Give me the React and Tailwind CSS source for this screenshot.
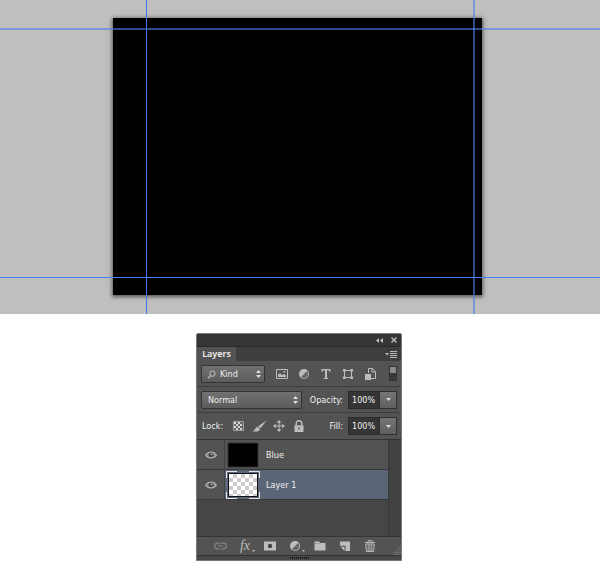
import { useState } from 'react'
import clsx from 'clsx'

const Svg = ({ w = 12, h = 12, className, children }) => (
  <svg width={w} height={h} viewBox={`0 0 ${w} ${h}`} fill="none" className={clsx('shrink-0', className)} aria-hidden="true">
    {children}
  </svg>
)

const SearchIcon = () => (
  <Svg w={9} h={9} className="text-[#c8c8c8]">
    <circle cx="5.4" cy="3.6" r="2.7" stroke="currentColor" />
    <path d="M3.5 5.6 1 8.3" stroke="currentColor" strokeWidth="1.2" />
  </Svg>
)

const UpDown = () => (
  <Svg w={5} h={8} className="pointer-events-none absolute right-1 top-[5px] text-[#e0e0e0]">
    <path d="M2.5 0 5 3H0zM2.5 8 0 5h5z" fill="currentColor" />
  </Svg>
)

const ImageIcon = () => (
  <Svg>
    <path d="M.5 1.5h11v9H.5z" stroke="currentColor" />
    <path d="M2 9V7l2-2 2 2.2L8 6l2 1.5V9z" fill="currentColor" />
    <path d="M7.5 3h1.8v1.6H7.5z" fill="currentColor" />
  </Svg>
)

const AdjustIcon = () => (
  <Svg>
    <circle cx="6" cy="6" r="5" fill="currentColor" />
    <path d="M3 9a4.200 4.200 0 0 0 6-6z" fill="#6a6a6a" />
  </Svg>
)

const TypeIcon = () => (
  <Svg>
    <path d="M1.5 1h9v3H9.8Q9.500 2.200 8.300 2.200H7V9.600Q7 10.300 8.400 10.300V11H3.600V10.300Q5 10.300 5 9.600V2.200H3.700Q2.500 2.200 2.200 4H1.500z" fill="currentColor" />
  </Svg>
)

const ShapeIcon = () => (
  <Svg>
    <path d="M2.500 2.500h7v7h-7z" stroke="currentColor" />
    <path d="M1 1h2.500v2.500H1zM8.500 1H11v2.500H8.500zM1 8.500h2.500V11H1zM8.500 8.500H11V11H8.500z" fill="currentColor" />
  </Svg>
)

const SmartIcon = () => (
  <Svg>
    <path d="M4.500 5V.5h4l3 3v7H7" stroke="currentColor" />
    <path d="M8 .5V4h3.500" stroke="currentColor" />
    <path d="M1 6h6v6H1z" fill="currentColor" />
  </Svg>
)

const CheckerIcon = () => (
  <Svg>
    <path d="M.5 1.500h10v9H.5z" fill="#666" stroke="#a0a0a0" />
    <path d="M1 2h2v2H1zM5 2h2v2H5zM3 4h2v2H3zM7 4h2v2H7zM1 6h2v2H1zM5 6h2v2H5zM3 8h2v2H3zM7 8h2v2H7z" fill="#d5d5d5" />
  </Svg>
)

const BrushIcon = () => (
  <Svg w={15}>
    <path d="M14.800.2 8.500 8.300 6.200 6.200z" fill="currentColor" />
    <path d="M5.600 6.700 8 9c-.5 2.500-3.900 3-7.800 2.200 2.800-.4 2.700-3.800 5.400-4.500z" fill="currentColor" />
  </Svg>
)

const MoveIcon = () => (
  <Svg>
    <path d="M6 1v10M1 6h10" stroke="currentColor" />
    <path d="m6 0 2.300 2.800H3.700zM6 12 3.700 9.200h4.600zM0 6l2.800-2.300v4.600zM12 6 9.200 8.300V3.700z" fill="currentColor" />
  </Svg>
)

const LockIcon = () => (
  <Svg>
    <path d="M3.200 5.500V3.500a2.800 2.800 0 0 1 5.600 0v2" stroke="currentColor" strokeWidth="1.400" />
    <path d="M1.500 5.300h9V12h-9z" fill="currentColor" />
    <path d="M5.400 7.300h1.200v2.500H5.400z" fill="#555" />
  </Svg>
)

const EyeIcon = () => (
  <Svg w={12} h={10}>
    <path d="M.7 5.300C3 1 9 1 11.300 5.300 9 8.900 3 8.900.7 5.300z" fill="#777" stroke="currentColor" strokeWidth="1.200" />
    <circle cx="6" cy="4.800" r="2.300" fill="#444" />
    <circle cx="6.600" cy="4.200" r=".9" fill="#bbb" />
  </Svg>
)

const LinkIcon = () => (
  <Svg w={13}>
    <path d="M5.800 3.200H3.500a2.800 2.800 0 0 0 0 5.600h2.300M7.200 3.200h2.300a2.800 2.800 0 0 1 0 5.600H7.200M4 6h5" stroke="#858585" strokeWidth="1.200" />
  </Svg>
)

const MaskIcon = () => (
  <Svg>
    <path d="M0 1.500h12v9H0z" fill="currentColor" />
    <circle cx="6" cy="6" r="2.200" fill="#444" />
  </Svg>
)

const FolderIcon = () => (
  <Svg>
    <path d="M.5 10.500v-9h4.700L6.500 3h5v7.500z" fill="currentColor" />
    <path d="M.5 3.500h5" stroke="#8b8b8b" strokeWidth=".7" />
  </Svg>
)

const NewIcon = () => (
  <Svg>
    <path d="M1 1.500h10v9.500H6.500V5.800H1z" fill="currentColor" />
    <path d="M1.500 6.800h4V11z" fill="currentColor" />
  </Svg>
)

const TrashIcon = () => (
  <Svg>
    <path d="M4 1.800V.7h4v1.100M1 2.500h10" stroke="currentColor" />
    <path d="M1.800 4h8.400l-.6 7.500H2.400z" stroke="currentColor" />
    <path d="M4.200 4.500v6.500M6 4.500v6.500M7.800 4.500v6.500" stroke="currentColor" strokeWidth=".9" />
  </Svg>
)

const Corner = () => (
  <Svg w={3} h={2} className="absolute -right-1 bottom-0">
    <path d="M0 0h3L1.500 2z" fill="currentColor" />
  </Svg>
)

const filters = [
  { name: 'Pixel layers', Icon: ImageIcon },
  { name: 'Adjustment layers', Icon: AdjustIcon },
  { name: 'Type layers', Icon: TypeIcon },
  { name: 'Shape layers', Icon: ShapeIcon },
  { name: 'Smart objects', Icon: SmartIcon },
]

const locks = [
  { name: 'Lock transparent pixels', Icon: CheckerIcon },
  { name: 'Lock image pixels', Icon: BrushIcon },
  { name: 'Lock position', Icon: MoveIcon },
  { name: 'Lock all', Icon: LockIcon },
]

const actions = [
  { name: 'Link layers', Icon: LinkIcon },
  { name: 'Layer style', text: 'fx', menu: true },
  { name: 'Add mask', Icon: MaskIcon },
  { name: 'New adjustment layer', Icon: AdjustIcon, menu: true },
  { name: 'New group', Icon: FolderIcon },
  { name: 'New layer', Icon: NewIcon },
  { name: 'Delete layer', Icon: TrashIcon },
]

const IconButton = ({ name, className, children }) => (
  <button type="button" aria-label={name} className={clsx('relative flex h-3 w-3 items-center justify-center text-[#bdbdbd]', className)}>
    {children}
  </button>
)

const Percent = ({ id, label, value, onChange }) => (
  <div className="ml-auto flex items-center">
    <label htmlFor={id} className="mr-[5px]">{label}</label>
    <input
      id={id}
      value={value}
      onChange={(e) => onChange(e.target.value)}
      className="h-[18px] w-8 border border-[#2b2b2b] bg-[#353535] pl-[3px] text-[9px] text-[#f0f0f0] outline-none"
    />
    <button type="button" aria-label={`${label} slider`} className="flex h-[18px] w-[17px] items-center justify-center border border-l-0 border-[#2f2f2f] bg-linear-to-b from-[#747474] to-[#606060]">
      <Svg w={5} h={3}><path d="M0 0h5L2.500 3z" fill="#ddd" /></Svg>
    </button>
  </div>
)

const selectClass =
  'h-[18px] w-full appearance-none rounded-xs border border-[#333] bg-linear-to-b from-[#717171] to-[#5c5c5c] text-[9px] text-[#eee] outline-none'

const Canvas = () => (
  <section aria-label="Canvas" className="relative bg-[#bfbfbf] pt-[18px] pr-[118px] pb-[19px] pl-[113px]">
    <div className="aspect-[369/277] w-full bg-black shadow-[0_1px_4px_1px_rgba(0,0,0,0.55)]" />
    <div className="absolute inset-x-0 top-7 h-0.5 bg-[#4a7fee]/60" />
    <div className="absolute inset-x-0 bottom-9 h-px bg-[#4080ff]" />
    <div className="absolute inset-y-0 left-[146px] w-px bg-[#3b78f5]" />
    <div className="absolute inset-y-0 right-[125px] w-0.5 bg-[#4a7fee]/60" />
  </section>
)

const LayersPanel = () => {
  const [selected, setSelected] = useState('Layer 1')
  const [opacity, setOpacity] = useState('100%')
  const [fill, setFill] = useState('100%')

  return (
    <aside className="w-[206px] overflow-hidden rounded-t-xs border border-[#777] bg-[#535353] text-[9px] leading-3 text-[#f0f0f0]">
      <header className="flex h-3 items-center justify-end gap-2 bg-[#353535] pr-1 text-[#c4c4c4]">
        <button type="button" aria-label="Collapse">
          <Svg w={7} h={5}><path d="M3 0v5L0 2.500zM7 0v5L4 2.500z" fill="currentColor" /></Svg>
        </button>
        <button type="button" aria-label="Close">
          <Svg w={6} h={6}><path d="m.5.5 5 5m0-5-5 5" stroke="currentColor" strokeWidth="1.300" /></Svg>
        </button>
      </header>
      <div className="flex h-[15px] items-center justify-between border-t border-[#292929] bg-[#3e3e3e] pr-1">
        <h2 className="flex h-full w-[39px] items-center justify-center bg-[#535353] font-['Noto_Sans',sans-serif] font-semibold">Layers</h2>
        <button type="button" aria-label="Panel menu" className="text-[#b8b8b8]">
          <Svg w={12} h={7}>
            <path d="M0 2h4L2 4.500z" fill="currentColor" />
            <path d="M5 .5h7M5 2.500h7M5 4.500h7M5 6.500h7" stroke="currentColor" />
          </Svg>
        </button>
      </div>

      {/* Filter */}
      <div className="flex h-[25px] items-center pr-1 pl-1">
        <div className="relative w-16">
          <span className="pointer-events-none absolute top-[5px] left-1.5"><SearchIcon /></span>
          <select aria-label="Filter type" className={clsx(selectClass, 'pl-[18px]')}>
            <option>Kind</option>
          </select>
          <UpDown />
        </div>
        <div className="ml-[11px] flex gap-2.5">
          {filters.map(({ name, Icon }) => (
            <IconButton key={name} name={name}><Icon /></IconButton>
          ))}
        </div>
        <button type="button" aria-label="Toggle filter" className="ml-auto flex h-[15px] w-2 flex-col border border-[#333] bg-[#383838]">
          <span className="h-1.5 w-full bg-[#8a8a8a]" />
        </button>
      </div>

      {/* Blend mode */}
      <div className="flex h-[26px] items-center border-t border-[#3e3e3e] pr-1 pl-1">
        <div className="relative w-[101px]">
          <select aria-label="Blend mode" className={clsx(selectClass, 'pl-1.5')}>
            <option>Normal</option>
          </select>
          <UpDown />
        </div>
        <Percent id="opacity" label="Opacity:" value={opacity} onChange={setOpacity} />
      </div>

      {/* Locks */}
      <div className="flex h-[27px] items-center border-t border-[#3e3e3e] pr-1 pl-[5px]">
        <span>Lock:</span>
        <div className="ml-2.5 flex gap-2">
          {locks.map(({ name, Icon }) => (
            <IconButton key={name} name={name}><Icon /></IconButton>
          ))}
        </div>
        <Percent id="fill" label="Fill:" value={fill} onChange={setFill} />
      </div>

      {/* Layer list */}
      <div className="flex h-[97px] border-t border-[#333] bg-[#464646]">
        <ul className="flex-1">
          {['Blue', 'Layer 1'].map((name) => (
            <li key={name} className="flex h-[30px] border-b border-[#383838] bg-[#535353]">
              <button type="button" aria-label={`Toggle ${name}`} className="flex w-7 items-center justify-center border-r border-[#414141] text-[#b5b5b5]">
                <EyeIcon />
              </button>
              <button
                type="button"
                onClick={() => setSelected(name)}
                className={clsx('flex flex-1 items-center gap-1.5 pl-px', selected === name && 'bg-[#5a6677]')}
              >
                <Svg w={34} h={28}>
                  {name === 'Blue' ? (
                    <path d="M2 2h30v24H2z" fill="#000" stroke="#353535" />
                  ) : (
                    <>
                      <defs>
                        <pattern id="checks" width="8" height="8" x="3" y="3" patternUnits="userSpaceOnUse">
                          <path d="M0 0h8v8H0z" fill="#fff" />
                          <path d="M4 0h4v4H4zM0 4h4v4H0z" fill="#ccc" />
                        </pattern>
                      </defs>
                      <path d="M2.500 2.500h29v23h-29z" fill="url(#checks)" stroke="#111" />
                      <path d="M.5 7V.5H11M23 .5h10.500V7M33.500 21v6.500H23M11 27.500H.5V21" stroke="#e8e8e8" />
                    </>
                  )}
                </Svg>
                <span>{name}</span>
              </button>
            </li>
          ))}
        </ul>
        <div className="w-[13px] border-l border-[#383838] bg-[#424242]" />
      </div>

      <footer className="flex h-[19px] items-center border-t border-[#333] pl-[17px]">
        <div className="flex gap-[13px]">
          {actions.map(({ name, Icon, text, menu }) => (
            <IconButton key={name} name={name}>
              {Icon ? <Icon /> : <span className="font-['Liberation_Serif',serif] text-sm leading-3 italic">{text}</span>}
              {menu && <Corner />}
            </IconButton>
          ))}
        </div>
        <Svg w={9} h={9} className="mt-auto ml-auto">
          <path d="M8 0v9M6 2v7M4 4v5M2 6v3" stroke="#858585" strokeDasharray="1 1" />
        </Svg>
      </footer>
      <div className="flex h-[5px] items-center justify-center border-t border-[#333] bg-[#484848]">
        <Svg w={19} h={2}><path d="M0 1h19" stroke="#1c1c1c" strokeWidth="2" strokeDasharray="1 1" /></Svg>
      </div>
    </aside>
  )
}

export default function App() {
  return (
    <div className="min-h-screen bg-white font-['DejaVu_Sans_Condensed','DejaVu_Sans',sans-serif]">
      <Canvas />
      <main className="flex justify-center pt-[19px] pr-0.5">
        <LayersPanel />
      </main>
    </div>
  )
}
